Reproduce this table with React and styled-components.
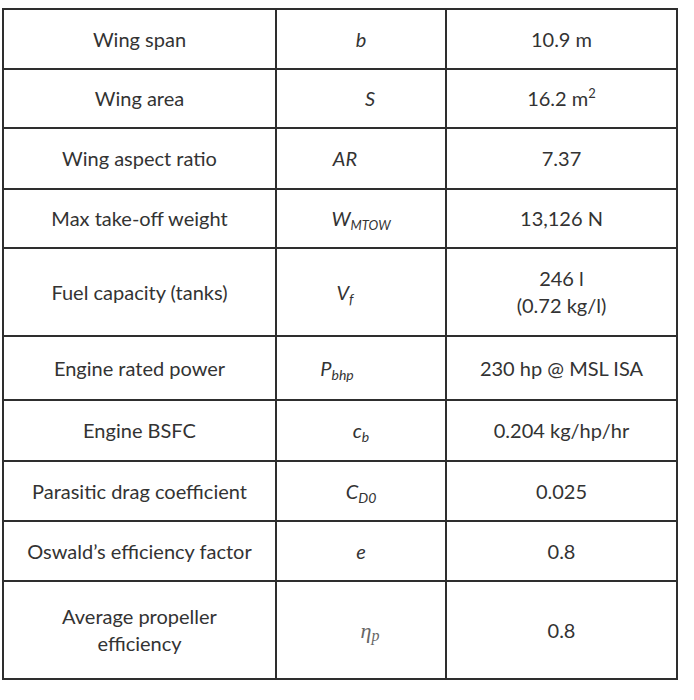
import styled, { createGlobalStyle } from 'styled-components';

const Global = createGlobalStyle`
  body {
    margin: 0;
    background: #ffffff;
  }
`;

const Page = styled.div`
  padding: 8px 0 0 2px;
  font-family: 'Lato', 'Open Sans', sans-serif;
  color: #333333;
`;

const Table = styled.table`
  border-collapse: collapse;
  width: 674px;
  table-layout: fixed;
  font-size: 20px;

  td {
    border: 2px solid #2e2e2e;
    text-align: center;
    vertical-align: middle;
    padding: 0 6px;
    line-height: 27px;
  }
`;

const Row = styled.tr`
  height: ${(p) => p.$h}px;
`;

const Sym = styled.span`
  font-style: italic;
  display: inline-block;
  transform: translateX(${(p) => p.$shift || 0}px);

  sub {
    font-size: 14px;
    vertical-align: -4px;
    line-height: 0;
  }
`;

const Eta = styled.span`
  font-family: 'Liberation Serif', 'DejaVu Serif', serif;
  font-style: italic;
  font-size: 22px;
  color: #666;
  display: inline-block;
  transform: translateX(9px);

  sub {
    font-size: 16px;
    vertical-align: -3px;
    line-height: 0;
  }
`;

const Sup = styled.sup`
  font-size: 13px;
  line-height: 0;
`;

const rows = [
  { name: 'Wing span', sym: <Sym>b</Sym>, value: '10.9 m', h: 60 },
  { name: 'Wing area', sym: <Sym $shift={9}>S</Sym>, value: <>16.2 m<Sup>2</Sup></>, h: 59 },
  { name: 'Wing aspect ratio', sym: <Sym $shift={-16}>AR</Sym>, value: '7.37', h: 61 },
  { name: 'Max take-off weight', sym: <Sym><span>W</span><sub style={{ fontSize: 13 }}>MTOW</sub></Sym>, value: '13,126 N', h: 59 },
  { name: 'Fuel capacity (tanks)', sym: <Sym $shift={-16}>V<sub>f</sub></Sym>, value: <>246 l<br />(0.72 kg/l)</>, h: 88 },
  { name: 'Engine rated power', sym: <Sym $shift={-24}>P<sub>bhp</sub></Sym>, value: '230 hp @ MSL ISA', h: 64 },
  { name: 'Engine BSFC', sym: <Sym>c<sub>b</sub></Sym>, value: '0.204 kg/hp/hr', h: 61 },
  { name: 'Parasitic drag coefficient', sym: <Sym>C<sub>D0</sub></Sym>, value: '0.025', h: 60 },
  { name: 'Oswald’s efficiency factor', sym: <Sym>e</Sym>, value: '0.8', h: 60 },
  { name: <>Average propeller<br />efficiency</>, sym: <Eta>η<sub>p</sub></Eta>, value: '0.8', h: 98 },
];

export default function App() {
  return (
    <Page>
      <Global />
      <Table>
        <colgroup>
          <col style={{ width: 273 }} />
          <col style={{ width: 170 }} />
          <col style={{ width: 231 }} />
        </colgroup>
        <tbody>
          {rows.map((r, i) => (
            <Row key={i} $h={r.h}>
              <td>{r.name}</td>
              <td>{r.sym}</td>
              <td>{r.value}</td>
            </Row>
          ))}
        </tbody>
      </Table>
    </Page>
  );
}
